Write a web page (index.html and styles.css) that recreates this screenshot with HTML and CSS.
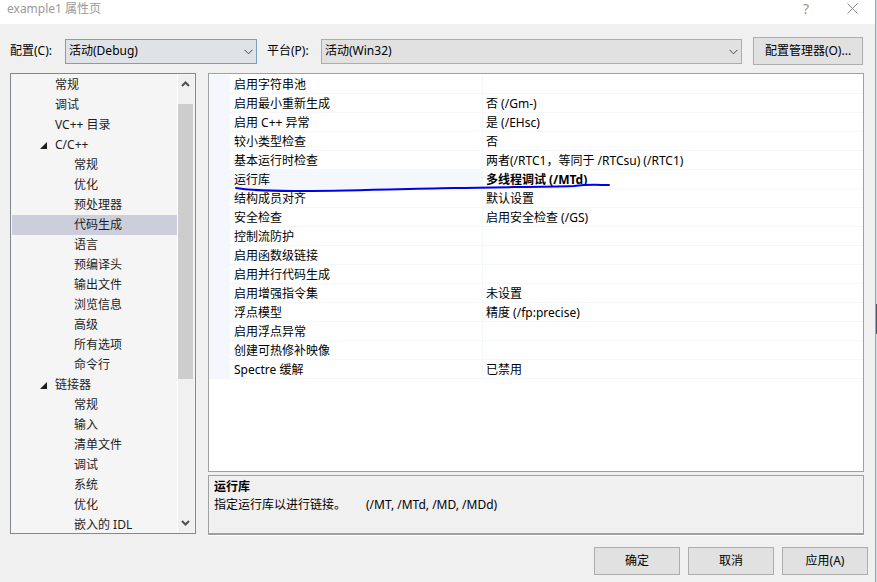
FILE: index.html
```html
<!DOCTYPE html>
<html lang="zh-CN">
<head>
  <meta charset="UTF-8">
  <meta name="viewport" content="width=device-width, initial-scale=1.0">
  <title>example1 属性页</title>
  <link rel="stylesheet" href="styles.css">
</head>
<body>
  <div class="dialog">
    <!-- 标题栏 -->
    <header class="titlebar">
      <h1>example1 属性页</h1>
      <button class="title-btn" type="button" aria-label="帮助">?</button>
      <button class="title-btn" type="button" aria-label="关闭">
        <svg width="11" height="11" viewBox="0 0 11 11"><path d="M.5 .5l10 10M10.500 .5l-10 10" stroke="#8a8a8a" fill="none"/></svg>
      </button>
    </header>

    <!-- 配置和平台 -->
    <div class="toolbar">
      <label for="config">配置(C):</label>
      <div class="select select-config">
        <select id="config"><option>活动(Debug)</option></select>
        <svg class="chevron" width="9" height="6" viewBox="0 0 9 6"><path d="M.5 .8l4 4 4-4"/></svg>
      </div>
      <label for="platform">平台(P):</label>
      <div class="select select-platform">
        <select id="platform"><option>活动(Win32)</option></select>
        <svg class="chevron" width="9" height="6" viewBox="0 0 9 6"><path d="M.5 .8l4 4 4-4"/></svg>
      </div>
      <button class="btn btn-manager" type="button">配置管理器(O)...</button>
    </div>

    <div class="main">
      <!-- 左侧目录树 -->
      <nav class="sidebar">
        <ul class="tree">
          <li><a href="#">常规</a></li>
          <li><a href="#">调试</a></li>
          <li><a href="#">VC++ 目录</a></li>
          <li>
            <a class="parent" href="#"><svg class="arrow" width="7" height="7" viewBox="0 0 7 7"><path d="M7 0v7H0z"/></svg>C/C++</a>
            <ul>
              <li><a href="#">常规</a></li>
              <li><a href="#">优化</a></li>
              <li><a href="#">预处理器</a></li>
              <li class="active"><a href="#">代码生成</a></li>
              <li><a href="#">语言</a></li>
              <li><a href="#">预编译头</a></li>
              <li><a href="#">输出文件</a></li>
              <li><a href="#">浏览信息</a></li>
              <li><a href="#">高级</a></li>
              <li><a href="#">所有选项</a></li>
              <li><a href="#">命令行</a></li>
            </ul>
          </li>
          <li>
            <a class="parent" href="#"><svg class="arrow" width="7" height="7" viewBox="0 0 7 7"><path d="M7 0v7H0z"/></svg>链接器</a>
            <ul>
              <li><a href="#">常规</a></li>
              <li><a href="#">输入</a></li>
              <li><a href="#">清单文件</a></li>
              <li><a href="#">调试</a></li>
              <li><a href="#">系统</a></li>
              <li><a href="#">优化</a></li>
              <li><a href="#">嵌入的 IDL</a></li>
            </ul>
          </li>
        </ul>
        <div class="scrollbar">
          <svg class="scroll-arrow" width="9" height="6" viewBox="0 0 9 6"><path d="M1 5l3.500-3.500L8 5"/></svg>
          <div class="track"><div class="thumb"></div></div>
          <svg class="scroll-arrow" width="9" height="6" viewBox="0 0 9 6"><path d="M1 1l3.500 3.500L8 1"/></svg>
        </div>
      </nav>

      <!-- 属性列表 -->
      <main class="content">
        <div class="props">
          <table>
            <tbody>
              <tr><td class="gutter"></td><th scope="row">启用字符串池</th><td></td></tr>
              <tr><td class="gutter"></td><th scope="row">启用最小重新生成</th><td>否 (/Gm-)</td></tr>
              <tr><td class="gutter"></td><th scope="row">启用 C++ 异常</th><td>是 (/EHsc)</td></tr>
              <tr><td class="gutter"></td><th scope="row">较小类型检查</th><td>否</td></tr>
              <tr><td class="gutter"></td><th scope="row">基本运行时检查</th><td>两者(/RTC1，等同于 /RTCsu) (/RTC1)</td></tr>
              <tr class="current"><td class="gutter"></td><th scope="row">运行库</th><td>多线程调试 (/MTd)</td></tr>
              <tr><td class="gutter"></td><th scope="row">结构成员对齐</th><td>默认设置</td></tr>
              <tr><td class="gutter"></td><th scope="row">安全检查</th><td>启用安全检查 (/GS)</td></tr>
              <tr><td class="gutter"></td><th scope="row">控制流防护</th><td></td></tr>
              <tr><td class="gutter"></td><th scope="row">启用函数级链接</th><td></td></tr>
              <tr><td class="gutter"></td><th scope="row">启用并行代码生成</th><td></td></tr>
              <tr><td class="gutter"></td><th scope="row">启用增强指令集</th><td>未设置</td></tr>
              <tr><td class="gutter"></td><th scope="row">浮点模型</th><td>精度 (/fp:precise)</td></tr>
              <tr><td class="gutter"></td><th scope="row">启用浮点异常</th><td></td></tr>
              <tr><td class="gutter"></td><th scope="row">创建可热修补映像</th><td></td></tr>
              <tr><td class="gutter"></td><th scope="row">Spectre 缓解</th><td>已禁用</td></tr>
            </tbody>
          </table>
          <!-- 手绘下划线 -->
          <svg class="marker" width="378" height="12" viewBox="0 0 378 12">
            <path d="M2 5C15 7 35 8 60 8C110 8 160 6 220 5C270 4 310 4 340 3C355 1 365 2 375 2"/>
          </svg>
        </div>
        <section class="desc">
          <h2>运行库</h2>
          <p>指定运行库以进行链接。<span class="options">(/MT, /MTd, /MD, /MDd)</span></p>
        </section>
      </main>
    </div>

    <!-- 底部按钮 -->
    <footer class="footer">
      <button class="btn" type="button">确定</button>
      <button class="btn" type="button">取消</button>
      <button class="btn" type="button">应用(A)</button>
    </footer>
  </div>
  <div class="behind"></div>
</body>
</html>
```
FILE: styles.css
```css
* {
  box-sizing: border-box;
}

/* 基本布局样式 */
body {
  margin: 0;
  display: flex;
  height: 100vh;
  overflow: hidden;
  font-family: "Noto Sans", "Noto Sans CJK SC", sans-serif;
  font-size: 12px;
  line-height: 18px;
  color: #000;
}

button,
select {
  font: inherit;
  color: inherit;
}

.dialog {
  flex: 1;
  display: flex;
  flex-direction: column;
  background-color: #f0f0f0;
  border-right: 1px solid #a5a5a5;
}

/* 窗口后面露出的一条边 */
.behind {
  width: 1px;
  background: linear-gradient(#d5d8e0 304px, #44546f 304px, #44546f 334px, #d5d8e0 334px);
}

/* 标题栏 */
.titlebar {
  display: flex;
  align-items: flex-start;
  height: 24px;
  padding-left: 7px;
  background-color: #fff;
  color: #999;
}

.titlebar h1 {
  flex: 1;
  margin: 0;
  font-size: 12px;
  font-weight: normal;
}

.title-btn {
  display: flex;
  align-items: center;
  justify-content: center;
  width: 46px;
  height: 17px;
  padding: 0;
  border: 0;
  background: none;
  font-size: 14px;
}

/* 工具栏 */
.toolbar {
  display: flex;
  align-items: center;
  padding: 13px 12px 8px 10px;
}

.toolbar label {
  width: 55px;
  white-space: nowrap;
}

.toolbar .select-config + label {
  width: 54px;
}

.select {
  position: relative;
}

.select-config {
  width: 192px;
  margin-right: 10px;
}

.select-platform {
  flex: 1;
  margin-right: 11px;
}

.select select {
  display: block;
  width: 100%;
  height: 25px;
  padding: 0 3px;
  border: 1px solid #acacac;
  border-radius: 0;
  background-color: #e1e1e1;
  appearance: none;
}

.select-config select {
  border-color: #7a9ebd;
  background-color: #dfe3e7;
}

.chevron {
  position: absolute;
  top: 10px;
  right: 4px;
  fill: none;
  stroke: #444;
  pointer-events: none;
}

.btn {
  width: 86px;
  height: 28px;
  padding: 0;
  border: 1px solid #adadad;
  background-color: #e1e1e1;
}

.btn-manager {
  width: 110px;
}

/* 主体 */
.main {
  flex: 1;
  display: flex;
  gap: 12px;
  min-height: 0;
  padding: 0 11px 0 10px;
}

.sidebar {
  display: flex;
  width: 186px;
  padding: 1px;
  border: 1px solid #828790;
  background-color: #f5f5f5;
  overflow: hidden;
}

.tree {
  flex: 1;
  overflow: hidden;
}

.tree,
.tree ul {
  margin: 0;
  padding: 0;
  list-style: none;
}

.tree a {
  display: block;
  height: 20px;
  padding-left: 43px;
  line-height: 20px;
  color: #1e1e1e;
  text-decoration: none;
}

.tree ul a {
  padding-left: 62px;
}

.tree .parent {
  padding-left: 28px;
}

.arrow {
  margin-right: 8px;
  vertical-align: 0;
  fill: #1e1e1e;
}

.tree .active {
  background-color: #cccedb;
}

/* 滚动条 */
.scrollbar {
  display: flex;
  flex-direction: column;
  align-items: center;
  width: 17px;
  padding: 6px 1px 6px 0;
  border-left: 1px solid #fff;
  background-color: #f0f0f0;
}

.scroll-arrow {
  fill: none;
  stroke: #505050;
  stroke-width: 2;
}

.track {
  flex: 1;
  width: 100%;
  padding: 17px 0;
}

.thumb {
  width: 100%;
  height: 69%;
  background-color: #cdcdcd;
}

/* 属性列表 */
.content {
  flex: 1;
  display: flex;
  flex-direction: column;
  gap: 3px;
}

.props {
  position: relative;
  flex: 1;
  padding-top: 1px;
  border: 1px solid #a0a0a0;
  background-color: #fff;
}

.props table {
  width: 100%;
  border-collapse: separate;
  border-spacing: 0;
  table-layout: fixed;
}

.props th,
.props td {
  height: 19px;
  padding: 2px 3px 0;
  border-bottom: 1px solid #f4f7fc;
  line-height: 16px;
  font-weight: normal;
  text-align: left;
  white-space: nowrap;
}

.props th {
  width: 253px;
  padding-left: 4px;
  border-right: 1px solid #f4f7fc;
}

.props .gutter {
  width: 21px;
  background-color: #f4f7fc;
}

.props .current th {
  background-color: #f4f7fc;
}

.props .current td {
  font-weight: bold;
}

.marker {
  position: absolute;
  top: 109px;
  left: 25px;
  fill: none;
  stroke: #0000f0;
  stroke-width: 2;
  stroke-linecap: round;
}

/* 说明 */
.desc {
  height: 59px;
  padding: 2px 5px;
  border: 1px solid #a0a0a0;
  box-shadow: 0 1px #a0a0a0, 0 2px #fff;
}

.desc h2,
.desc p {
  margin: 0;
  font-size: 12px;
}

.options {
  margin-left: 20px;
}

/* 底部 */
.footer {
  display: flex;
  justify-content: flex-end;
  gap: 8px;
  padding: 13px 7px 7px;
}
```
